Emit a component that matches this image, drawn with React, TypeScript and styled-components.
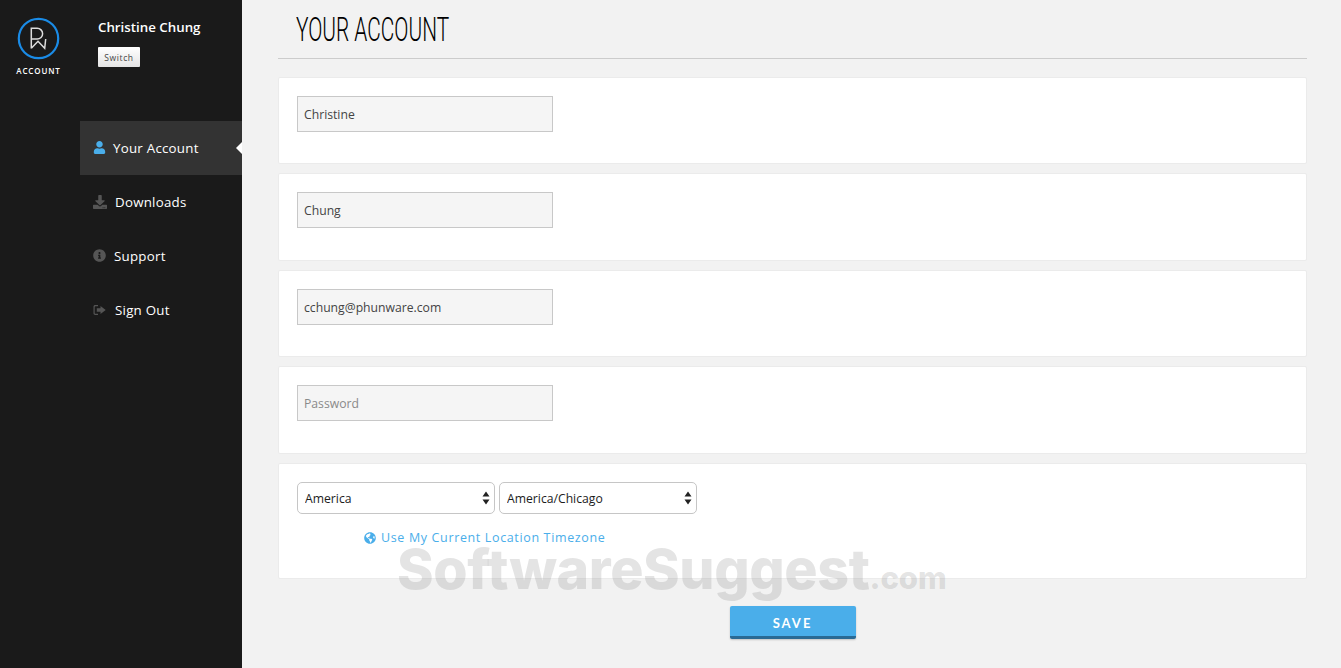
import React from "react";
import styled, { createGlobalStyle } from "styled-components";
import { FaUser, FaDownload, FaInfoCircle, FaGlobeAmericas } from "react-icons/fa";

const Global = createGlobalStyle`
  html, body { margin: 0; padding: 0; height: 100%; overflow: hidden; }
  body { background: #f2f2f2; font-family: "Open Sans", "Liberation Sans", sans-serif; }
  #root { height: 100%; }
`;

const Page = styled.div`
  position: relative;
  display: flex;
  width: 1341px;
  height: 668px;
  overflow: hidden;
`;

const Rail = styled.aside`
  width: 80px;
  flex: none;
  background: #1a1a1a;
  display: flex;
  flex-direction: column;
  align-items: center;
  padding: 17px 3px 0 0;
  box-sizing: border-box;
`;

const RailLabel = styled.div`
  margin-top: 5px;
  color: #fff;
  font-size: 8px;
  font-weight: 600;
  letter-spacing: 0.85px;
  line-height: 12px;
`;

const Side = styled.nav`
  width: 162px;
  flex: none;
  background: #1a1a1a;
  display: flex;
  flex-direction: column;
`;

const Profile = styled.div`
  height: 121px;
  padding: 18px 0 0 18px;
  box-sizing: border-box;
`;

const ProfileName = styled.div`
  color: #fff;
  font-size: 13.3px;
  font-weight: 600;
  line-height: 19px;
`;

const SwitchButton = styled.button`
  display: block;
  margin-top: 10px;
  width: 42px;
  height: 20px;
  padding: 0;
  border: 0;
  border-radius: 1px;
  background: linear-gradient(#ffffff, #e4e4e4);
  color: #444;
  font-family: inherit;
  font-size: 8.5px;
  letter-spacing: 0.6px;
`;

const NavItem = styled.a<{ $active?: boolean; $gap: number }>`
  position: relative;
  height: 54px;
  display: flex;
  align-items: center;
  gap: ${(p) => p.$gap}px;
  padding: 0 0 1px 13px;
  background: ${(p) => (p.$active ? "#333333" : "transparent")};
  color: #fff;
  font-size: 13.3px;
  font-weight: 500;
  letter-spacing: 0.25px;
  box-sizing: border-box;
  svg { flex: none; color: ${(p) => (p.$active ? "#4aaeea" : "#555555")}; }
`;

const Caret = styled.span`
  position: absolute;
  right: 0;
  top: 21px;
  width: 0;
  height: 0;
  border-top: 6px solid transparent;
  border-bottom: 6px solid transparent;
  border-right: 6px solid #fff;
`;

const Main = styled.main`
  flex: 1;
  padding: 0 34px 0 36px;
  display: flex;
  flex-direction: column;
  min-width: 0;
`;

const Header = styled.header`
  height: 59px;
  flex: none;
  box-sizing: border-box;
  border-bottom: 1px solid #cccccc;
  padding-left: 18px;
  margin-bottom: 18px;
`;

const Title = styled.h1`
  margin: 0;
  padding-top: 8px;
  font-family: "Roboto", "Liberation Sans", sans-serif;
  font-size: 34px;
  line-height: 42px;
  font-weight: 300;
  color: #000;
  white-space: nowrap;
  transform: scaleX(0.613);
  transform-origin: left top;
`;

const Cards = styled.div`
  display: flex;
  flex-direction: column;
  gap: 9px;
`;

const Card = styled.section<{ $height: number }>`
  height: ${(p) => p.$height}px;
  box-sizing: border-box;
  background: #fff;
  border: 1px solid #ebebeb;
  border-radius: 2px;
  padding: 18px;
`;

const TextField = styled.input`
  display: block;
  width: 256px;
  height: 36px;
  box-sizing: border-box;
  padding: 1px 6px 0;
  border: 1px solid #c8c8c8;
  border-radius: 0;
  background: #f5f5f5;
  color: #444;
  font-family: inherit;
  font-size: 12.2px;
  outline: none;
  &::placeholder { color: #8a8a8a; opacity: 1; }
`;

const SelectRow = styled.div`
  display: flex;
  gap: 4px;
`;

const SelectWrap = styled.div`
  position: relative;
  width: 198px;
  height: 32px;
  svg { position: absolute; right: 5px; top: 9px; }
`;

const Select = styled.select`
  width: 100%;
  height: 100%;
  box-sizing: border-box;
  appearance: none;
  border: 1px solid #c6c6c6;
  border-radius: 5px;
  background: #fff;
  padding: 1px 7px 0;
  color: #1c1c1c;
  font-family: inherit;
  font-size: 12.2px;
  outline: none;
`;

const LocationLink = styled.a`
  display: flex;
  align-items: center;
  gap: 5px;
  margin: 15px 0 0 67px;
  color: #4aaeea;
  font-size: 12.5px;
  letter-spacing: 0.64px;
  line-height: 18px;
`;

const Actions = styled.div`
  display: flex;
  justify-content: center;
  margin-top: 27px;
`;

const SaveButton = styled.button`
  width: 126px;
  height: 33px;
  padding: 4px 0 0;
  border: 0;
  border-bottom: 3px solid #2a6a94;
  border-radius: 2px;
  background: #4aaeea;
  color: #fff;
  font-family: "Lato", "Open Sans", sans-serif;
  font-size: 13px;
  font-weight: 700;
  letter-spacing: 2px;
  box-shadow: 0 1px 2px rgba(0, 0, 0, 0.2);
`;

const Watermark = styled.div`
  position: absolute;
  left: 397px;
  top: 536px;
  display: flex;
  align-items: baseline;
  font-family: "Inter", "Open Sans", sans-serif;
  font-weight: 800;
  font-size: 55.5px;
  letter-spacing: -0.4px;
  line-height: 66px;
  color: rgba(120, 120, 120, 0.2);
  pointer-events: none;
  white-space: nowrap;
`;

const WatermarkTail = styled.span`
  font-size: 31px;
  letter-spacing: 0;
`;

const Logo = () => (
  <svg width="43" height="43" viewBox="0 0 43 43" fill="none">
    <circle cx="21.5" cy="21.5" r="19.7" stroke="#1a8be6" strokeWidth="2.2" />
    <path
      d="M14.3 31.5V11.3H20.2a5.4 5.4 0 0 1 0 10.8H14.3M14.3 31.3L21 24.3L27.7 31.3L28.7 22"
      stroke="#dddddd"
      strokeWidth="1.5"
    />
  </svg>
);

const SignOutIcon = () => (
  <svg width="13" height="12" viewBox="0 0 13 12" fill="#555555">
    <path d="M5 1H2.2C1.2 1 .5 1.7.5 2.7v6.6c0 1 .7 1.7 1.7 1.7H5V9.8H2.6c-.5 0-.9-.4-.9-.9V3.1c0-.5.4-.9.9-.9H5z" />
    <path d="M7.5 2l5.2 4-5.2 4V7.8H3.8V4.2h3.7z" />
  </svg>
);

const Arrows = () => (
  <svg width="8" height="14" viewBox="0 0 8 14" fill="#222">
    <path d="M4 0.5L7.5 5.5H.5zM4 13.5L.5 8.5H7.5z" />
  </svg>
);

const nav = [
  { label: "Your Account", icon: <FaUser size={13} />, gap: 7, active: true },
  { label: "Downloads", icon: <FaDownload size={14} />, gap: 8 },
  { label: "Support", icon: <FaInfoCircle size={13} />, gap: 8 },
  { label: "Sign Out", icon: <SignOutIcon />, gap: 9 },
];

export default function App() {
  return (
    <Page>
      <Global />
      <Rail>
        <Logo />
        <RailLabel>ACCOUNT</RailLabel>
      </Rail>
      <Side>
        <Profile>
          <ProfileName>Christine Chung</ProfileName>
          <SwitchButton>Switch</SwitchButton>
        </Profile>
        {nav.map((n) => (
          <NavItem key={n.label} $active={n.active} $gap={n.gap}>
            {n.icon}
            {n.label}
            {n.active && <Caret />}
          </NavItem>
        ))}
      </Side>
      <Main>
        <Header>
          <Title>YOUR ACCOUNT</Title>
        </Header>
        <Cards>
          <Card $height={87.33}><TextField defaultValue="Christine" /></Card>
          <Card $height={87.33}><TextField defaultValue="Chung" /></Card>
          <Card $height={87.33}><TextField defaultValue="cchung@phunware.com" /></Card>
          <Card $height={88}><TextField placeholder="Password" /></Card>
          <Card $height={116}>
            <SelectRow>
              <SelectWrap>
                <Select defaultValue="America"><option>America</option></Select>
                <Arrows />
              </SelectWrap>
              <SelectWrap>
                <Select defaultValue="America/Chicago"><option>America/Chicago</option></Select>
                <Arrows />
              </SelectWrap>
            </SelectRow>
            <LocationLink>
              <FaGlobeAmericas size={12} />
              Use My Current Location Timezone
            </LocationLink>
          </Card>
        </Cards>
        <Actions>
          <SaveButton>SAVE</SaveButton>
        </Actions>
      </Main>
      <Watermark>
        SoftwareSuggest<WatermarkTail>.com</WatermarkTail>
      </Watermark>
    </Page>
  );
}
